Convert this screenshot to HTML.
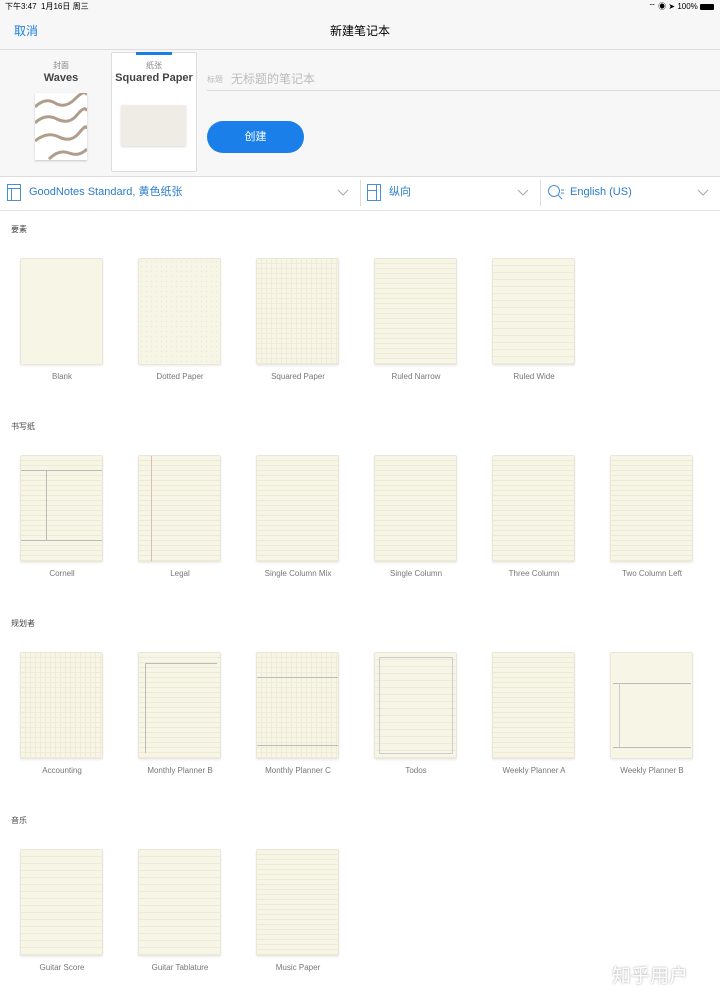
<!DOCTYPE html>
<html><head><meta charset="utf-8"><style>
*{margin:0;padding:0;box-sizing:border-box}
body{width:720px;height:1004px;background:#fff;font-family:"Liberation Sans","Noto Sans CJK SC",sans-serif;position:relative;overflow:hidden;color:#333}
.a{position:absolute;line-height:1.2}
.top{left:0;top:0;width:720px;height:176px;background:#f7f7f7}
.th{position:absolute;width:83px;height:107px;background:#f7f5e6;border:1px solid #ebe7d8;border-radius:2px;box-shadow:0 1px 2px rgba(0,0,0,.08)}
.lb{position:absolute;width:120px;text-align:center;font-size:8px;color:#777}
.sec{position:absolute;left:11px;font-size:8px;color:#444}
.ruled{background:repeating-linear-gradient(#f7f5e6 0 4px,#eeead6 4px 5px)}
.grid{background:repeating-linear-gradient(90deg,transparent 0 4px,#efebd8 4px 5px),repeating-linear-gradient(#f7f5e6 0 4px,#efebd8 4px 5px)}
.dot{background:radial-gradient(#ebe6d2 0.6px,transparent 0.8px) 0 0/5px 5px,#f7f5e6}
.rw{background:repeating-linear-gradient(#f7f5e6 0 6px,#eeead8 6px 7px)}
</style></head><body>
<div class="a top"></div>
<div class="a" style="left:5px;top:2px;font-size:8px;color:#000">下午3:47&nbsp;&nbsp;1月16日 周三</div>
<div class="a" style="right:6px;top:2px;font-size:8px;color:#000">⌔ ◉ ➤ 100% <span style="display:inline-block;width:14px;height:6px;background:#000;border-radius:1px;vertical-align:middle"></span></div>
<div class="a" style="left:14px;top:24px;font-size:12px;color:#1a7fe0">取消</div>
<div class="a" style="left:0;width:720px;top:24px;text-align:center;font-size:12px;color:#000">新建笔记本</div>
<div class="a" style="left:0;top:49px;width:720px;height:1px;background:#ddd"></div>
<div class="a" style="left:22px;top:61px;width:78px;text-align:center;font-size:8px;color:#888">封面</div>
<div class="a" style="left:22px;top:72px;width:78px;text-align:center;font-size:11px;font-weight:bold;color:#444">Waves</div>
<div class="a" style="left:35px;top:93px;width:52px;height:67px;background:#fff;box-shadow:0 1px 2px rgba(0,0,0,.2)">
<svg width="52" height="67" viewBox="0 0 52 67"><g fill="none" stroke="#b09d8c" stroke-width="3"><path d="M0 14 Q10 4 20 10 T40 6 T52 2"/><path d="M0 30 Q10 20 22 26 T42 22 T52 18"/><path d="M0 48 Q12 38 24 44 T44 40 T52 36"/><path d="M14 66 Q24 56 34 60 T52 56"/></g></svg></div>
<div class="a" style="left:111px;top:52px;width:86px;height:120px;background:#fff;border:1px solid #ddd;border-radius:2px"></div>
<div class="a" style="left:136px;top:52px;width:36px;height:3px;background:#1a7fe0"></div>
<div class="a" style="left:111px;top:61px;width:86px;text-align:center;font-size:8px;color:#888">纸张</div>
<div class="a" style="left:111px;top:72px;width:86px;text-align:center;font-size:11px;font-weight:bold;color:#444">Squared Paper</div>
<div class="a" style="left:121px;top:105px;width:65px;height:41px;background:#eeece4;border-radius:2px;box-shadow:0 1px 2px rgba(0,0,0,.15)"></div>
<div class="a" style="left:207px;top:75px;font-size:8px;color:#bbb">标题</div>
<div class="a" style="left:231px;top:72px;font-size:12px;color:#bbb">无标题的笔记本</div>
<div class="a" style="left:207px;top:90px;width:513px;height:1px;background:#ddd"></div>
<div class="a" style="left:207px;top:121px;width:97px;height:32px;background:#1a7fe8;border-radius:16px;color:#fff;font-size:11px;text-align:center;line-height:32px">创建</div>
<div class="a" style="left:0;top:176px;width:720px;height:1px;background:#ddd"></div>
<div class="a" style="left:0;top:210px;width:720px;height:1px;background:#e4e4e4"></div>
<div class="a" style="left:360px;top:180px;width:1px;height:26px;background:#ddd"></div>
<div class="a" style="left:540px;top:180px;width:1px;height:26px;background:#ddd"></div>
<svg class="a" style="left:7px;top:184px" width="14" height="17"><rect x="0.5" y="0.5" width="13" height="16" fill="none" stroke="#4a8fd0"/><path d="M0.5 4.5H13.5M4.5 4.5V16.5" stroke="#4a8fd0" fill="none"/></svg>
<div class="a" style="left:29px;top:186px;font-size:11px;color:#2b7ccc">GoodNotes Standard, 黄色纸张</div>
<svg class="a" style="left:367px;top:184px" width="14" height="17"><rect x="0.5" y="0.5" width="13" height="16" fill="none" stroke="#4a8fd0"/><path d="M0.5 6.5H9.5M9.5 0.5V16.5" stroke="#4a8fd0" fill="none"/></svg>
<div class="a" style="left:389px;top:186px;font-size:11px;color:#2b7ccc">纵向</div>
<svg class="a" style="left:547px;top:184px" width="18" height="18"><circle cx="7" cy="7" r="5.5" fill="none" stroke="#4a8fd0"/><path d="M11 11L15 15M14 6H17M14 9H17" stroke="#4a8fd0" fill="none"/></svg>
<div class="a" style="left:570px;top:186px;font-size:11px;color:#2b7ccc">English (US)</div>
<svg class="a" style="left:337px;top:189px" width="12" height="7"><path d="M1 1L6 6L11 1" stroke="#aaa" fill="none"/></svg>
<svg class="a" style="left:517px;top:189px" width="12" height="7"><path d="M1 1L6 6L11 1" stroke="#aaa" fill="none"/></svg>
<svg class="a" style="left:697px;top:189px" width="12" height="7"><path d="M1 1L6 6L11 1" stroke="#aaa" fill="none"/></svg>

<div class="sec" style="top:224px">要素</div>
<div class="sec" style="top:421px">书写纸</div>
<div class="sec" style="top:618px">规划者</div>
<div class="sec" style="top:815px">音乐</div>

<div class="th" style="left:20px;top:258px"></div>
<div class="th dot" style="left:138px;top:258px"></div>
<div class="th grid" style="left:256px;top:258px"></div>
<div class="th ruled" style="left:374px;top:258px"></div>
<div class="th rw" style="left:492px;top:258px"></div>
<div class="lb" style="left:2px;top:372px">Blank</div>
<div class="lb" style="left:120px;top:372px">Dotted Paper</div>
<div class="lb" style="left:238px;top:372px">Squared Paper</div>
<div class="lb" style="left:356px;top:372px">Ruled Narrow</div>
<div class="lb" style="left:474px;top:372px">Ruled Wide</div>

<div class="th ruled" style="left:20px;top:455px"><div class="a" style="left:0;top:14px;width:81px;height:1px;background:#bbb"></div><div class="a" style="left:25px;top:14px;width:1px;height:70px;background:#bbb"></div><div class="a" style="left:0;top:84px;width:81px;height:1px;background:#bbb"></div></div>
<div class="th ruled" style="left:138px;top:455px"><div class="a" style="left:12px;top:0;width:1px;height:105px;background:#dbb"></div></div>
<div class="th ruled" style="left:256px;top:455px"></div>
<div class="th ruled" style="left:374px;top:455px"></div>
<div class="th ruled" style="left:492px;top:455px"></div>
<div class="th ruled" style="left:610px;top:455px"></div>
<div class="lb" style="left:2px;top:569px">Cornell</div>
<div class="lb" style="left:120px;top:569px">Legal</div>
<div class="lb" style="left:238px;top:569px">Single Column Mix</div>
<div class="lb" style="left:356px;top:569px">Single Column</div>
<div class="lb" style="left:474px;top:569px">Three Column</div>
<div class="lb" style="left:592px;top:569px">Two Column Left</div>

<div class="th grid" style="left:20px;top:652px"></div>
<div class="th ruled" style="left:138px;top:652px"><div class="a" style="left:6px;top:10px;width:72px;height:1px;background:#bbb"></div><div class="a" style="left:6px;top:10px;width:1px;height:90px;background:#bbb"></div></div>
<div class="th grid" style="left:256px;top:652px"><div class="a" style="left:0;top:24px;width:81px;height:1px;background:#bbb"></div><div class="a" style="left:0;top:92px;width:81px;height:1px;background:#bbb"></div></div>
<div class="th rw" style="left:374px;top:652px"><div class="a" style="left:4px;top:4px;width:74px;height:97px;border:1px solid #ccc"></div></div>
<div class="th ruled" style="left:492px;top:652px"></div>
<div class="th" style="left:610px;top:652px"><div class="a" style="left:2px;top:30px;width:78px;height:1px;background:#bbb"></div><div class="a" style="left:8px;top:30px;width:1px;height:64px;background:#ccc"></div><div class="a" style="left:2px;top:94px;width:78px;height:1px;background:#bbb"></div></div>
<div class="lb" style="left:2px;top:766px">Accounting</div>
<div class="lb" style="left:120px;top:766px">Monthly Planner B</div>
<div class="lb" style="left:238px;top:766px">Monthly Planner C</div>
<div class="lb" style="left:356px;top:766px">Todos</div>
<div class="lb" style="left:474px;top:766px">Weekly Planner A</div>
<div class="lb" style="left:592px;top:766px">Weekly Planner B</div>

<div class="th rw" style="left:20px;top:849px"></div>
<div class="th rw" style="left:138px;top:849px"></div>
<div class="th ruled" style="left:256px;top:849px"></div>
<div class="lb" style="left:2px;top:963px">Guitar Score</div>
<div class="lb" style="left:120px;top:963px">Guitar Tablature</div>
<div class="lb" style="left:238px;top:963px">Music Paper</div>
<div class="a" style="left:612px;top:966px;font-size:19px;color:#fff;text-shadow:0 0 2px #999">知乎用户</div>
</body></html>
